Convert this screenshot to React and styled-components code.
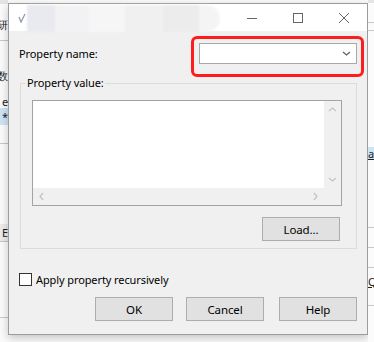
import styled, { createGlobalStyle } from "styled-components";

const GlobalStyle = createGlobalStyle`
  html, body {
    margin: 0;
    padding: 0;
    width: 374px;
    height: 342px;
    overflow: hidden;
    background: #fbfbfb;
  }
  * {
    box-sizing: border-box;
  }
`;

const Page = styled.div`
  display: flex;
  align-items: flex-start;
  width: 374px;
  height: 342px;
  font-family: "Segoe UI", "Noto Sans", sans-serif;
  font-size: 11px;
  letter-spacing: -0.1px;
  color: #000;
`;

/* parent window peeking out behind the dialog */
const Strip = styled.div`
  width: ${(p) => p.$width}px;
  height: 342px;
  display: flex;
  flex-direction: column;
  overflow: hidden;
  flex-shrink: 0;
`;

const StripRow = styled.div`
  height: ${(p) => p.$h}px;
  flex-shrink: 0;
  overflow: hidden;
  background: ${(p) => p.$bg || "#fbfbfb"};
  border-bottom: ${(p) => (p.$line ? "1px solid #c8c8c8" : "none")};
  display: flex;
  align-items: center;
  justify-content: ${(p) => (p.$right ? "flex-end" : "flex-start")};
  white-space: nowrap;
  font-size: 11px;
  line-height: 1;
  color: #222;
  text-decoration: ${(p) => (p.$underline ? "underline" : "none")};
`;

const Window = styled.div`
  width: 360px;
  height: 332px;
  margin-top: 3px;
  flex-shrink: 0;
  border: 1px solid #9c9c9c;
  background: #f0f0f0;
  box-shadow: 0 3px 9px rgba(0, 0, 0, 0.22);
  display: flex;
  flex-direction: column;
`;

const TitleBar = styled.div`
  height: 27px;
  background: #fff;
  display: flex;
  align-items: center;
  flex-shrink: 0;
`;

const AppIcon = styled.svg`
  width: 10px;
  height: 12px;
  margin-left: 8px;
`;

const TitleMask = styled.div`
  width: 193px;
  height: 27px;
  margin-top: 2px;
  border-radius: 0 16px 16px 0;
  background: linear-gradient(
    90deg,
    #e8eaf0 0 28px,
    #f2f2f4 28px 62px,
    #f6f6f6 62px 98px,
    #f0f0f0 98px 136px,
    #ececec 136px 172px,
    #f4f4f4 172px
  );
  filter: blur(1.2px);
`;

const Spacer = styled.div`
  flex: 1;
`;

const CaptionButton = styled.div`
  width: 46px;
  height: 27px;
  display: flex;
  align-items: center;
  justify-content: center;

  svg {
    width: 10px;
    height: 10px;
    stroke: #666;
    stroke-width: 1;
    fill: none;
  }
`;

const Body = styled.div`
  flex: 1;
  padding: 12px 10px 0 10px;
  display: flex;
  flex-direction: column;
`;

const NameRow = styled.div`
  height: 21px;
  display: flex;
  align-items: center;
  justify-content: space-between;
`;

const Label = styled.span`
  line-height: 16px;
`;

const ComboWrap = styled.div`
  position: relative;
  width: 158px;
  height: 21px;
`;

const Combo = styled.div`
  width: 100%;
  height: 100%;
  background: #fff;
  border: 1px solid #a9a9a9;
  display: flex;
  align-items: center;
  justify-content: flex-end;
  padding-right: 5px;

  svg {
    width: 9px;
    height: 5px;
    stroke: #5f5f5f;
    stroke-width: 1.2;
    fill: none;
  }
`;

const Highlight = styled.div`
  position: absolute;
  top: -7px;
  left: -8px;
  right: -7px;
  bottom: -13px;
  border: 3px solid #ff1c1c;
  border-radius: 6px;
  pointer-events: none;
`;

const GroupBox = styled.fieldset`
  margin: 11px 0 0 1px;
  padding: 9px 14px 7px 11px;
  border: 1px solid #dcdcdc;
  min-inline-size: 0;
  display: flex;
  flex-direction: column;
`;

const Legend = styled.legend`
  margin-left: -6px;
  padding: 0 1px;
  line-height: 16px;
`;

const TextBox = styled.div`
  width: 310px;
  height: 106px;
  border: 1px solid #a3a3a3;
  display: grid;
  grid-template-columns: 1fr 17px;
  grid-template-rows: 1fr 17px;
  background: #f0f0f0;
`;

const TextArea = styled.div`
  background: #fff;
`;

const ScrollBar = styled.div`
  display: flex;
  flex-direction: ${(p) => (p.$vertical ? "column" : "row")};
  align-items: center;
  justify-content: space-between;
  padding: ${(p) => (p.$vertical ? "6px 0" : "0 6px")};

  svg {
    width: ${(p) => (p.$vertical ? "9px" : "5px")};
    height: ${(p) => (p.$vertical ? "5px" : "9px")};
    stroke: #c2c2c2;
    stroke-width: 1.2;
    fill: none;
  }
`;

const LoadRow = styled.div`
  display: flex;
  justify-content: flex-end;
  margin-top: 11px;
  padding-right: 2px;
`;

const Button = styled.button`
  width: 78px;
  height: 24px;
  padding: 0;
  background: #e1e1e1;
  border: 1px solid #adadad;
  border-radius: 0;
  font-family: inherit;
  font-size: 11.5px;
  letter-spacing: inherit;
  color: #000;
  margin-left: ${(p) => p.$ml || 0}px;
`;

const CheckRow = styled.label`
  display: flex;
  align-items: center;
  gap: 4px;
  margin-top: 22px;
  height: 16px;
`;

const CheckBox = styled.span`
  width: 13px;
  height: 13px;
  background: #fff;
  border: 1px solid #333;
`;

const ButtonRow = styled.div`
  display: flex;
  justify-content: flex-end;
  margin-top: 10px;
  gap: 13px;
`;

const Chevron = ({ dir }) => {
  const d = {
    down: "M1 1 L4.5 4 L8 1",
    up: "M1 4 L4.5 1 L8 4",
    left: "M4 1 L1 4.5 L4 8",
    right: "M1 1 L4 4.5 L1 8",
  }[dir];
  const vb = dir === "up" || dir === "down" ? "0 0 9 5" : "0 0 5 9";
  return (
    <svg viewBox={vb}>
      <path d={d} />
    </svg>
  );
};

export default function App() {
  return (
    <>
      <GlobalStyle />
      <Page>
        <Strip $width={8}>
          <StripRow $h={4} $bg="#e4e4e4" />
          <StripRow $h={10} />
          <StripRow $h={20} $right>研</StripRow>
          <StripRow $h={7} $line />
          <StripRow $h={24} />
          <StripRow $h={20} $right>数</StripRow>
          <StripRow $h={10} />
          <StripRow $h={13} $right>e</StripRow>
          <StripRow $h={17} $bg="#cde4f7" $right>*</StripRow>
          <StripRow $h={19} $line />
          <StripRow $h={80} />
          <StripRow $h={18} $bg="#ececec" $line $right>E</StripRow>
          <StripRow $h={76} $line />
          <StripRow $h={30} />
        </Strip>

        <Window>
          <TitleBar>
            <AppIcon viewBox="0 0 10 12">
              <path d="M2 5 L4 10 L8 2" stroke="#8c95a6" strokeWidth="1.2" fill="none" />
            </AppIcon>
            <TitleMask />
            <Spacer />
            <CaptionButton>
              <svg viewBox="0 0 10 10">
                <path d="M0 5.5 H10" />
              </svg>
            </CaptionButton>
            <CaptionButton>
              <svg viewBox="0 0 10 10">
                <rect x="0.5" y="0.5" width="9" height="9" />
              </svg>
            </CaptionButton>
            <CaptionButton>
              <svg viewBox="0 0 10 10">
                <path d="M0 0 L10 10 M10 0 L0 10" />
              </svg>
            </CaptionButton>
          </TitleBar>

          <Body>
            <NameRow>
              <Label>Property name:</Label>
              <ComboWrap>
                <Combo>
                  <Chevron dir="down" />
                </Combo>
                <Highlight />
              </ComboWrap>
            </NameRow>

            <GroupBox>
              <Legend>Property value:</Legend>
              <TextBox>
                <TextArea />
                <ScrollBar $vertical>
                  <Chevron dir="up" />
                  <Chevron dir="down" />
                </ScrollBar>
                <ScrollBar>
                  <Chevron dir="left" />
                  <Chevron dir="right" />
                </ScrollBar>
                <div />
              </TextBox>
              <LoadRow>
                <Button>Load...</Button>
              </LoadRow>
            </GroupBox>

            <CheckRow>
              <CheckBox />
              <span>Apply property recursively</span>
            </CheckRow>

            <ButtonRow>
              <Button>OK</Button>
              <Button>Cancel</Button>
              <Button $ml={2}>Help</Button>
            </ButtonRow>
          </Body>
        </Window>

        <Strip $width={6}>
          <StripRow $h={3} $bg="#e4e4e4" />
          <StripRow $h={20} $line />
          <StripRow $h={8} $line />
          <StripRow $h={116} />
          <StripRow $h={13} $bg="#cde4f7" $underline>ad</StripRow>
          <StripRow $h={68} $line />
          <StripRow $h={20} $line />
          <StripRow $h={20} $line />
          <StripRow $h={26} $underline>Q</StripRow>
          <StripRow $h={12} $line />
          <StripRow $h={36} />
        </Strip>
      </Page>
    </>
  );
}
